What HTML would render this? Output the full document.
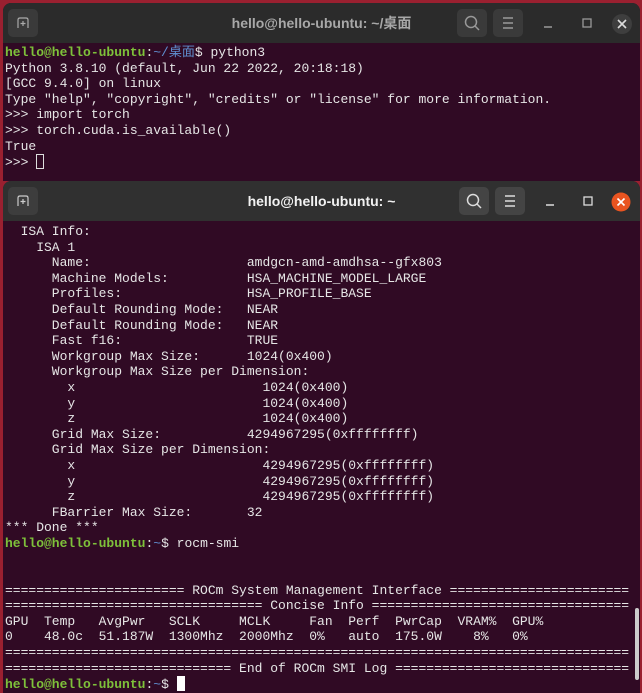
<!DOCTYPE html>
<html><head><meta charset="utf-8"><style>
*{margin:0;padding:0;box-sizing:border-box}
body{width:642px;height:693px;overflow:hidden;background:#9a2030;position:relative;font-family:"Liberation Mono","Noto Sans CJK SC",monospace}
.win{position:absolute;left:3px;right:2px;background:#300a24;border-radius:8px 8px 0 0;overflow:hidden}
.tb{height:40px;background:#2b2b2b;position:relative}
.tb .title{position:absolute;left:0;right:0;top:0;font:bold 14px "Liberation Sans","Noto Sans CJK SC",sans-serif;line-height:40px;text-align:center;color:#a8a8a8}
.btn{position:absolute;top:6px;width:30px;height:28px;background:#3a3a3a;border-radius:5px}
.term{color:#e6e6e6;font-size:13px;line-height:15.6px;white-space:pre;padding-left:2px}
.g{color:#7ec13a;font-weight:bold}.b{color:#5f8fd0}
</style></head><body>
<div class="win" style="top:3px;height:178px">
 <div class="tb">
  <div class="btn" style="left:5px"><svg width="30" height="28"><path d="M10 19V11Q10 9 12 9H18Q20 9 20 11V19" stroke="#aaa" fill="none" stroke-width="1.2"/><path d="M15 12v5M12.5 14.5h5" stroke="#aaa" stroke-width="1.2"/></svg></div>
  <div class="title">hello@hello-ubuntu: ~/桌面</div>
  <div class="btn" style="left:454px"><svg width="30" height="28"><circle cx="14" cy="13" r="5.5" stroke="#999" fill="none" stroke-width="1.5"/><path d="M18 17l4 4" stroke="#999" stroke-width="1.5"/></svg></div>
  <div class="btn" style="left:490px"><svg width="30" height="28"><path d="M10 9h10M10 14h10M10 19h10" stroke="#999" stroke-width="1.5"/></svg></div>
  <svg style="position:absolute;left:530px;top:8px" width="110" height="26"><path d="M11 16h8" stroke="#999" stroke-width="1.5"/><rect x="50" y="8" width="8" height="8" stroke="#999" fill="none" stroke-width="1.3"/><circle cx="89" cy="13" r="10" fill="#3e3e3e"/><path d="M85 9l8 8M93 9l-8 8" stroke="#ddd" stroke-width="1.6"/></svg>
 </div>
 <div class="term" style="padding-top:2px"><span class="g">hello@hello-ubuntu</span>:<span class="b">~/桌面</span>$ python3
Python 3.8.10 (default, Jun 22 2022, 20:18:18)
[GCC 9.4.0] on linux
Type "help", "copyright", "credits" or "license" for more information.
&gt;&gt;&gt; import torch
&gt;&gt;&gt; torch.cuda.is_available()
True
&gt;&gt;&gt; <span style="display:inline-block;width:8px;height:15px;border:1px solid #ddd;vertical-align:-3px"></span></div>
</div>
<div class="win" style="top:181px;bottom:0">
 <div class="tb" style="background:#303030">
  <div class="btn" style="left:5px;background:#3d3d3d"><svg width="30" height="28"><path d="M10 19V11Q10 9 12 9H18Q20 9 20 11V19" stroke="#ccc" fill="none" stroke-width="1.2"/><path d="M15 12v5M12.5 14.5h5" stroke="#ccc" stroke-width="1.2"/></svg></div>
  <div class="title" style="color:#f2f2f2">hello@hello-ubuntu: ~</div>
  <div class="btn" style="left:456px;background:#444"><svg width="30" height="28"><circle cx="14" cy="13" r="5.5" stroke="#ddd" fill="none" stroke-width="1.5"/><path d="M18 17l4 4" stroke="#ddd" stroke-width="1.5"/></svg></div>
  <div class="btn" style="left:492px;background:#444"><svg width="30" height="28"><path d="M10 9h10M10 14h10M10 19h10" stroke="#ddd" stroke-width="1.5"/></svg></div>
  <svg style="position:absolute;left:530px;top:8px" width="110" height="26"><path d="M13 16h8" stroke="#ddd" stroke-width="1.5"/><rect x="51" y="8" width="8" height="8" stroke="#ddd" fill="none" stroke-width="1.3"/><circle cx="88" cy="13" r="9.5" fill="#e95420"/><path d="M84.5 9.5l7 7M91.5 9.5l-7 7" stroke="#fff" stroke-width="1.6"/></svg>
 </div>
 <div class="term" style="padding-top:3px">  ISA Info:
    ISA 1
      Name:                    amdgcn-amd-amdhsa--gfx803
      Machine Models:          HSA_MACHINE_MODEL_LARGE
      Profiles:                HSA_PROFILE_BASE
      Default Rounding Mode:   NEAR
      Default Rounding Mode:   NEAR
      Fast f16:                TRUE
      Workgroup Max Size:      1024(0x400)
      Workgroup Max Size per Dimension:
        x                        1024(0x400)
        y                        1024(0x400)
        z                        1024(0x400)
      Grid Max Size:           4294967295(0xffffffff)
      Grid Max Size per Dimension:
        x                        4294967295(0xffffffff)
        y                        4294967295(0xffffffff)
        z                        4294967295(0xffffffff)
      FBarrier Max Size:       32
*** Done ***
<span class="g">hello@hello-ubuntu</span>:<span class="b">~</span>$ rocm-smi


======================= ROCm System Management Interface =======================
================================= Concise Info =================================
GPU  Temp   AvgPwr   SCLK     MCLK     Fan  Perf  PwrCap  VRAM%  GPU%
0    48.0c  51.187W  1300Mhz  2000Mhz  0%   auto  175.0W    8%   0%
================================================================================
============================= End of ROCm SMI Log ==============================
<span class="g">hello@hello-ubuntu</span>:<span class="b">~</span>$ <span style="display:inline-block;width:8px;height:15px;background:#fff;vertical-align:-3px"></span></div>
 <div style="position:absolute;right:1px;top:427px;width:4px;height:72px;background:#ccc;border-radius:2px"></div>
</div>
</body></html>
